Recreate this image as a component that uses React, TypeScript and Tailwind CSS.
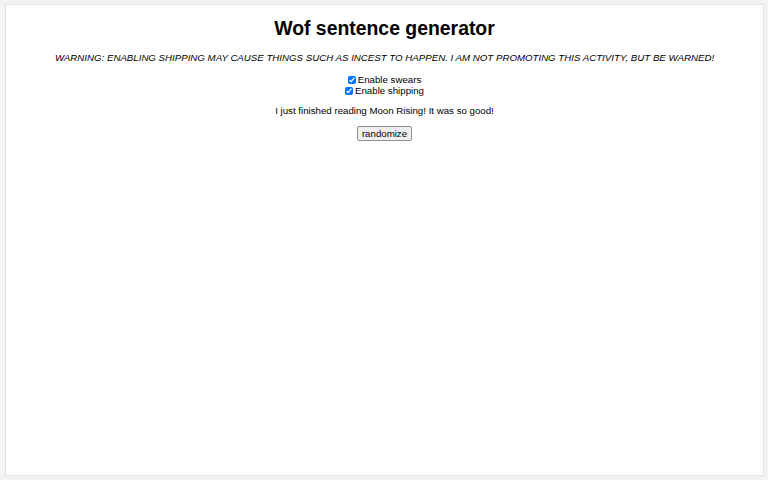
import React, { useState } from "react";

const sentences = [
  "I just finished reading Moon Rising! It was so good!",
];

export default function App() {
  const [swears, setSwears] = useState(true);
  const [shipping, setShipping] = useState(true);
  const [idx, setIdx] = useState(0);

  return (
    <div
      className="w-[768px] h-[480px] bg-[#f3f3f3] pt-[4px] pl-[5px] pr-[4px] pb-[4px]"
      style={{ fontFamily: '"Liberation Sans", Arial, sans-serif' }}
    >
      <div className="h-[472px] w-[759px] bg-white border border-[#e2e2e2] flex flex-col items-center text-black">
        <h1 className="mt-[11px] text-[19.4px] leading-[24px] font-bold">Wof sentence generator</h1>
        <p className="mt-[12px] text-[9.7px] leading-[12px] italic">
          WARNING: ENABLING SHIPPING MAY CAUSE THINGS SUCH AS INCEST TO HAPPEN. I AM NOT PROMOTING THIS ACTIVITY, BUT BE WARNED!
        </p>
        <div className="mt-[10px] flex flex-col items-center text-[9.7px] leading-[11px]">
          <label className="flex items-center gap-[2px]">
            <input
              type="checkbox"
              checked={swears}
              onChange={(e) => setSwears(e.target.checked)}
              className="w-[8px] h-[8px] m-0 accent-[#0075ff]"
            />
            Enable swears
          </label>
          <label className="flex items-center gap-[2px]">
            <input
              type="checkbox"
              checked={shipping}
              onChange={(e) => setShipping(e.target.checked)}
              className="w-[8px] h-[8px] m-0 accent-[#0075ff]"
            />
            Enable shipping
          </label>
        </div>
        <p className="mt-[9px] text-[9.7px] leading-[12px]">{sentences[idx]}</p>
        <button
          onClick={() => setIdx((idx + 1) % sentences.length)}
          className="mt-[9px] h-[15px] px-[3.5px] text-[9.7px] leading-[12px] bg-[#efefef] border border-[#8f8f8f] rounded-[2px]"
        >
          randomize
        </button>
      </div>
    </div>
  );
}
